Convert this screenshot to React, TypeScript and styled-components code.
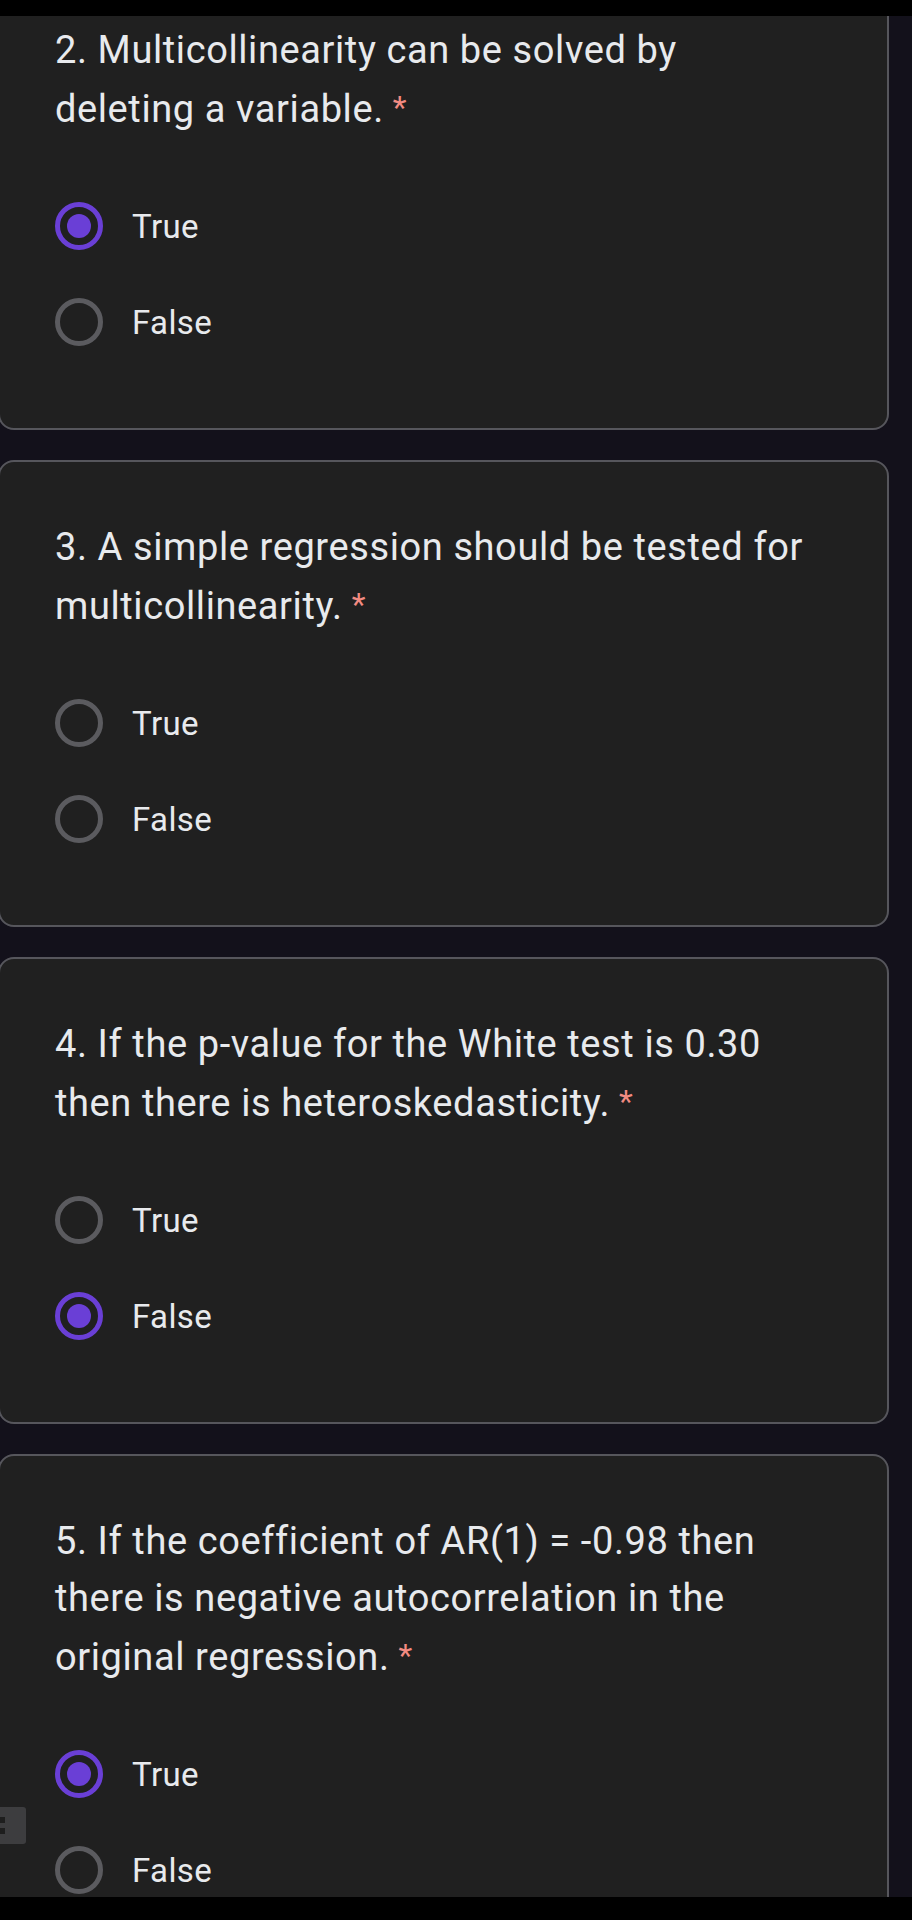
import React from 'react';
import styled, { createGlobalStyle } from 'styled-components';

const GlobalStyle = createGlobalStyle`
  html, body {
    margin: 0;
    padding: 0;
    background: #000;
  }
  body {
    font-family: Roboto, "Noto Sans", "Liberation Sans", sans-serif;
    color: #e8eaed;
  }
`;

const Page = styled.div`
  position: relative;
  width: 912px;
  height: 1920px;
  display: flex;
  flex-direction: column;
  overflow: hidden;
  background: #000;
`;

const StatusBar = styled.div`
  height: 16px;
  flex: none;
  background: #000;
`;

const Viewport = styled.div`
  flex: 1;
  overflow: hidden;
  background: #13111b;
`;

const NavBar = styled.div`
  height: 23px;
  flex: none;
  background: #000;
`;

const Feed = styled.div`
  display: flex;
  flex-direction: column;
  gap: 30px;
  margin-top: -53px;
`;

const Card = styled.section`
  box-sizing: border-box;
  width: 891px;
  margin-left: -2px;
  padding: 57px 60px 58px 55px;
  background: #202020;
  border: 2px solid #56565c;
  border-radius: 16px;
`;

const Question = styled.div`
  font-size: 38px;
  line-height: 57px;
  letter-spacing: 0.6px;
  color: #e8eaed;
  margin-bottom: 40px;
`;

const Line = styled.span`
  display: block;
  white-space: nowrap;
`;

const Required = styled.span`
  color: #f28b82;
  font-size: 32px;
  margin-left: 9px;
  vertical-align: 4px;
`;

const Options = styled.div`
  display: flex;
  flex-direction: column;
`;

const Option = styled.label`
  height: 96px;
  display: flex;
  align-items: center;
  gap: 29px;
  font-size: 33px;
  letter-spacing: 0.4px;
  color: #e8eaed;
`;

const Radio = styled.span<{ $checked: boolean }>`
  box-sizing: border-box;
  flex: none;
  width: 48px;
  height: 48px;
  border-radius: 50%;
  border: 5px solid ${(p) => (p.$checked ? '#6a3fd6' : '#5b5b5f')};
  display: flex;
  align-items: center;
  justify-content: center;

  &::after {
    content: '';
    width: 24px;
    height: 24px;
    border-radius: 50%;
    background: #6a3fd6;
    display: ${(p) => (p.$checked ? 'block' : 'none')};
  }
`;

const EdgeTab = styled.div`
  position: absolute;
  left: 0;
  top: 1807px;
  width: 26px;
  height: 37px;
  background: #3d3d3f;
  border-radius: 0 3px 3px 0;
  display: flex;
  flex-direction: column;
  justify-content: center;
  gap: 5px;
`;

const TabMark = styled.span`
  width: 5px;
  height: 6px;
  background: #1e1e1e;
`;

type Item = {
  lines: string[];
  answer?: 'True' | 'False';
};

const items: Item[] = [
  { lines: ['2. Multicollinearity can be solved by', 'deleting a variable.'], answer: 'True' },
  { lines: ['3. A simple regression should be tested for', 'multicollinearity.'] },
  { lines: ['4. If the p-value for the White test is 0.30', 'then there is heteroskedasticity.'], answer: 'False' },
  {
    lines: [
      '5. If the coefficient of AR(1) = -0.98 then',
      'there is negative autocorrelation in the',
      'original regression.',
    ],
    answer: 'True',
  },
];

const QuestionCard: React.FC<{ item: Item }> = ({ item }) => (
  <Card>
    <Question>
      {item.lines.map((l, i) => (
        <Line key={i}>
          {l}
          {i === item.lines.length - 1 && <Required>*</Required>}
        </Line>
      ))}
    </Question>
    <Options>
      {['True', 'False'].map((opt) => (
        <Option key={opt}>
          <Radio $checked={item.answer === opt} />
          {opt}
        </Option>
      ))}
    </Options>
  </Card>
);

const App: React.FC = () => (
  <>
    <GlobalStyle />
    <Page>
      <StatusBar />
      <Viewport>
        <Feed>
          {items.map((it, i) => (
            <QuestionCard key={i} item={it} />
          ))}
        </Feed>
      </Viewport>
      <NavBar />
      <EdgeTab>
        <TabMark />
        <TabMark />
      </EdgeTab>
    </Page>
  </>
);

export default App;
